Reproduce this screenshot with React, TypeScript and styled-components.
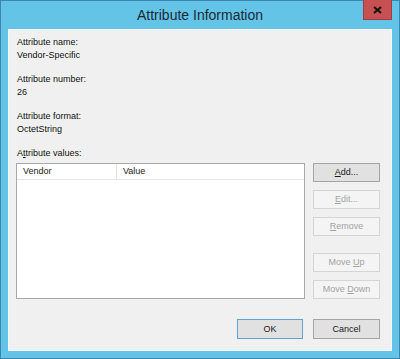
import React from "react";
import styled, { createGlobalStyle } from "styled-components";

const Global = createGlobalStyle`
  html, body { margin: 0; padding: 0; background: #ffffff; }
  body { font-family: "Liberation Sans", Arial, sans-serif; }
  * { box-sizing: border-box; }
`;

const Window = styled.div`
  position: relative;
  width: 400px;
  height: 359px;
  background: #64c4e8;
  border: 1px solid #3a88ad;
  display: flex;
  flex-direction: column;
`;

const TitleBar = styled.div`
  height: 28px;
  display: flex;
  align-items: center;
  justify-content: center;
  flex-shrink: 0;
`;

const Title = styled.div`
  font-family: "Liberation Sans", Arial, sans-serif;
  font-size: 14px;
  color: #1b2a33;
`;

const CloseButton = styled.div`
  position: absolute;
  top: -1px;
  right: 7px;
  width: 29px;
  height: 20px;
  background: #c75050;
  border: 1px solid #a33c3c;
  border-top: none;
  display: flex;
  align-items: center;
  justify-content: center;
`;

const Client = styled.div`
  flex: 1;
  margin: 0 7px 7px 7px;
  background: #f0f0f0;
  border: 1px solid #f7f7f7;
  padding: 6px 11px 11px 7px;
  display: flex;
  flex-direction: column;
  font-family: "Liberation Sans", Arial, sans-serif;
  font-size: 9px;
  line-height: 13px;
  color: #111;
`;

const Group = styled.div`
  display: flex;
  flex-direction: column;
  height: 26px;
  margin-bottom: 11px;
  padding-left: 1px;
`;

const Line = styled.div`
  white-space: nowrap;
`;

const ValuesLabel = styled.div`
  padding-left: 1px;
  margin-bottom: 3px;
`;

const Accel = styled.span`
  text-decoration: underline;
`;

const Main = styled.div`
  display: flex;
  gap: 8px;
  height: 136px;
`;

const ListBox = styled.div`
  width: 289px;
  height: 136px;
  background: #ffffff;
  border: 1px solid #a9a9a9;
  display: flex;
  flex-direction: column;
`;

const Header = styled.div`
  display: flex;
  height: 16px;
  border-bottom: 1px solid #e5e5e5;
`;

const HeaderCell = styled.div<{ $w?: number }>`
  ${(p) => (p.$w ? `width: ${p.$w}px;` : "flex: 1;")}
  padding-left: 6px;
  line-height: 15px;
  color: #222;
  border-right: ${(p) => (p.$w ? "1px solid #e5e5e5" : "none")};
`;

const ButtonColumn = styled.div`
  display: flex;
  flex-direction: column;
  width: 67px;
`;

const Button = styled.div<{ $disabled?: boolean; $default?: boolean; $gap?: number; $w?: number }>`
  width: ${(p) => p.$w ?? 67}px;
  height: ${(p) => (p.$w ? 20 : 19)}px;
  margin-top: ${(p) => p.$gap ?? 0}px;
  display: flex;
  align-items: center;
  justify-content: center;
  font-size: 9px;
  color: ${(p) => (p.$disabled ? "#a3a3a3" : "#1a1a1a")};
  background: ${(p) => (p.$disabled ? "#f4f4f4" : "#e1e1e1")};
  border: 1px solid
    ${(p) => (p.$disabled ? "#d5d5d5" : p.$default ? "#5fa2d6" : "#a5a5a5")};
`;

const Footer = styled.div`
  display: flex;
  justify-content: flex-end;
  gap: 10px;
  margin-top: 20px;
`;

export default function App() {
  return (
    <>
      <Global />
      <Window>
        <TitleBar>
          <Title>Attribute Information</Title>
        </TitleBar>
        <CloseButton>
          <svg width="9" height="8" viewBox="0 0 9 8">
            <path d="M1 1 L8 7 M8 1 L1 7" stroke="#111" strokeWidth="2" />
          </svg>
        </CloseButton>
        <Client>
          <Group>
            <Line>Attribute name:</Line>
            <Line>Vendor-Specific</Line>
          </Group>
          <Group>
            <Line>Attribute number:</Line>
            <Line>26</Line>
          </Group>
          <Group>
            <Line>Attribute format:</Line>
            <Line>OctetString</Line>
          </Group>
          <ValuesLabel>
            A<Accel>t</Accel>tribute values:
          </ValuesLabel>
          <Main>
            <ListBox>
              <Header>
                <HeaderCell $w={100}>Vendor</HeaderCell>
                <HeaderCell>Value</HeaderCell>
              </Header>
            </ListBox>
            <ButtonColumn>
              <Button>
                <Accel>A</Accel>dd...
              </Button>
              <Button $disabled $gap={8}>
                <Accel>E</Accel>dit...
              </Button>
              <Button $disabled $gap={8}>
                <Accel>R</Accel>emove
              </Button>
              <Button $disabled $gap={17}>
                Move&nbsp;<Accel>U</Accel>p
              </Button>
              <Button $disabled $gap={8}>
                Move&nbsp;<Accel>D</Accel>own
              </Button>
            </ButtonColumn>
          </Main>
          <Footer>
            <Button $default $w={66}>OK</Button>
            <Button $w={67}>Cancel</Button>
          </Footer>
        </Client>
      </Window>
    </>
  );
}
